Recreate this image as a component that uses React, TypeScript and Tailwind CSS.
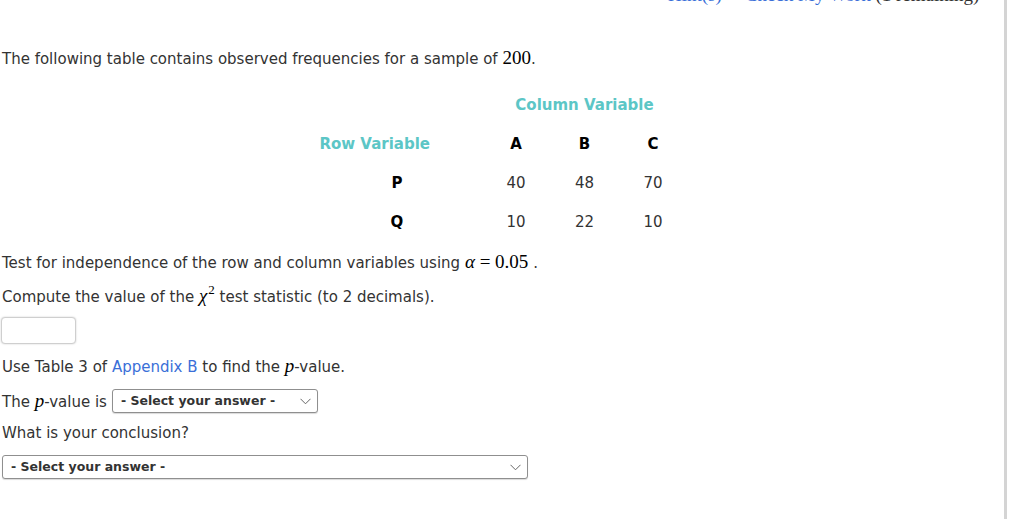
import React from "react";

const M = "font-['Liberation_Serif',serif]";

function Chevron() {
  return (
    <svg width="11" height="7" viewBox="0 0 11 7" className="shrink-0">
      <path d="M0.5 0.8 L5.5 5.8 L10.5 0.8" fill="none" stroke="#666" strokeWidth="1" />
    </svg>
  );
}

function Select({ w }: { w: string }) {
  return (
    <div
      className={`${w} h-[24px] flex items-center justify-between pl-[8px] pr-[6px] border border-[#8f8f8f] rounded-[3px] bg-white shadow-[0_1px_1px_rgba(0,0,0,0.15)]`}
    >
      <span className="font-bold text-[12.5px] text-[#333]">- Select your answer -</span>
      <Chevron />
    </div>
  );
}

export default function App() {
  return (
    <div className="w-[1024px] h-[521px] overflow-hidden bg-white font-['DejaVu_Sans',Verdana,sans-serif] text-[15px] text-[#333]">
      <div className="w-[1007px] h-[519px] flex flex-col border-r-[3px] border-[#d4d4d4]">
        <div className={`${M} text-[19px] leading-[20px] mt-[-15px] pl-[668px] whitespace-nowrap`}>
          <span className="text-[#3a6fd8]">Hint(s)</span>
          <span className="inline-block w-[23px]" />
          <span className="text-[#3a6fd8]">Check My Work</span>
          <span className="text-[#333]"> (1 remaining)</span>
        </div>

        <div className="pl-[2px] mt-[43px] h-[20px] leading-[20px]">
          The following table contains observed frequencies for a sample of{" "}
          <span className={`${M} text-[19px] text-black`}>200</span>.
        </div>

        <div className="mt-[18px] ml-[300px] grid grid-cols-[60px_74px_48px_68px_69px_68px] auto-rows-[39px] items-center text-center">
          <div className="col-span-3" />
          <div className="col-span-3 font-bold text-[#5cc6c6]">Column Variable</div>

          <div className="col-span-2 text-right pr-[4px] font-bold text-[#5cc6c6]">Row Variable</div>
          <div />
          <div className="font-bold text-black">A</div>
          <div className="font-bold text-black">B</div>
          <div className="font-bold text-black">C</div>

          <div />
          <div className="font-bold text-black">P</div>
          <div />
          <div>40</div>
          <div>48</div>
          <div>70</div>

          <div />
          <div className="font-bold text-black">Q</div>
          <div />
          <div>10</div>
          <div>22</div>
          <div>10</div>
        </div>

        <div className="pl-[2px] mt-[10px] h-[20px] leading-[20px]">
          Test for independence of the row and column variables using{" "}
          <span className={`${M} text-[19px] text-black`}>
            <i>α</i> = 0.05
          </span>{" "}
          .
        </div>

        <div className="pl-[2px] mt-[14px] h-[20px] leading-[20px]">
          Compute the value of the{" "}
          <span className={`${M} text-[19px] text-black`}>
            <i>χ</i>
            <span className="text-[13px] relative top-[-8px] ml-[1px]">2</span>
          </span>{" "}
          test statistic (to 2 decimals).
        </div>

        <div className="ml-[1px] mt-[11px] w-[75px] h-[27px] border border-[#cfcfcf] rounded-[4px] shadow-[0_0_2px_rgba(0,0,0,0.2)] bg-white" />

        <div className="pl-[2px] mt-[12px] h-[20px] leading-[20px]">
          Use Table 3 of <span className="text-[#3a6fd8]">Appendix B</span> to find the{" "}
          <i className={`${M} text-[19px] text-black`}>p</i>-value.
        </div>

        <div className="pl-[2px] mt-[13px] flex items-center gap-[5px] h-[24px]">
          <span>
            The <i className={`${M} text-[19px] text-black`}>p</i>-value is
          </span>
          <Select w="w-[206px]" />
        </div>

        <div className="pl-[2px] mt-[10px] h-[20px] leading-[20px]">What is your conclusion?</div>

        <div className="ml-[2px] mt-[12px]">
          <Select w="w-[526px]" />
        </div>
      </div>
    </div>
  );
}
